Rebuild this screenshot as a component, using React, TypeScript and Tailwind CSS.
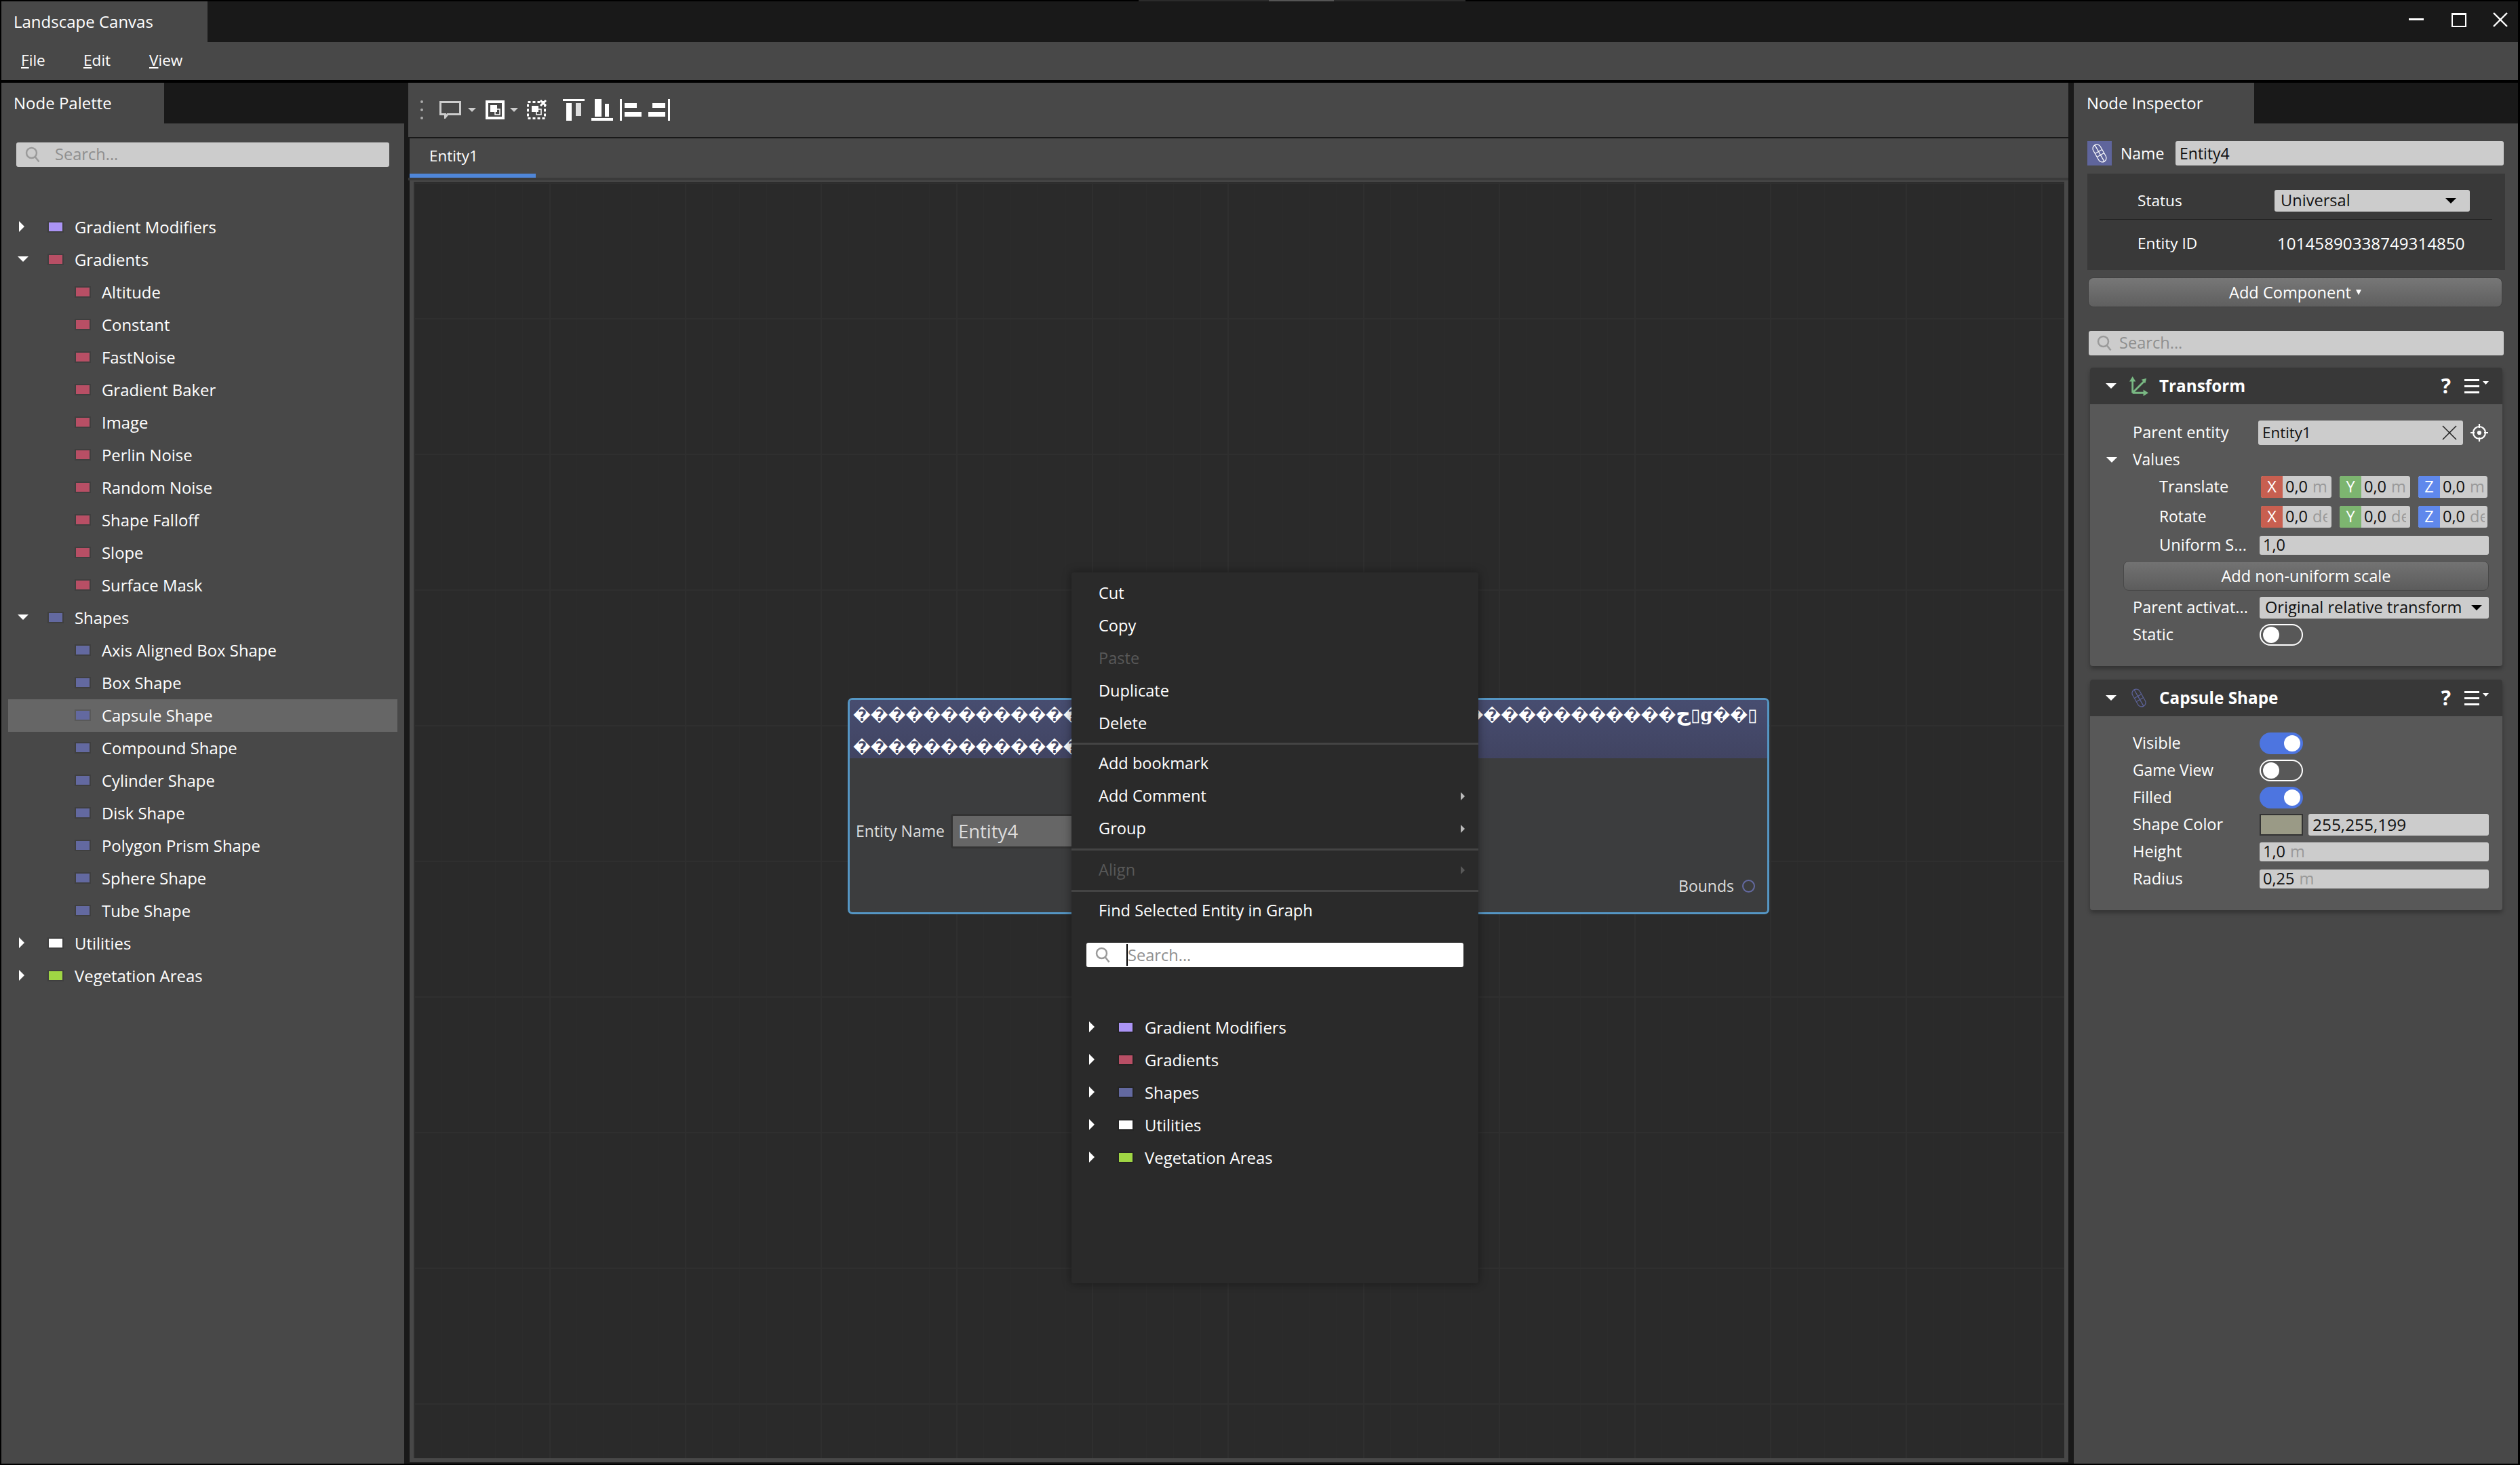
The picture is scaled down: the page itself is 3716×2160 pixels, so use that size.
import React from 'react';

// Palette tree data
const RED = 'bg-[#b84f65]';
const BLUE = 'bg-[#6369a0]';
const PURPLE = 'bg-[#ab94f5]';
const WHITE = 'bg-white';
const GREEN = 'bg-[#9fd644]';

const gradients = ['Altitude', 'Constant', 'FastNoise', 'Gradient Baker', 'Image', 'Perlin Noise', 'Random Noise', 'Shape Falloff', 'Slope', 'Surface Mask'];
const shapes = ['Axis Aligned Box Shape', 'Box Shape', 'Capsule Shape', 'Compound Shape', 'Cylinder Shape', 'Disk Shape', 'Polygon Prism Shape', 'Sphere Shape', 'Tube Shape'];

const CaretRight = ({ className = '' }: { className?: string }) => (
  <svg width="8" height="16" viewBox="0 0 8 16" className={className}>
    <polygon points="0,0 8,8 0,16" fill="currentColor" />
  </svg>
);

const CaretDown = ({ className = '', w = 16, h = 8 }: { className?: string; w?: number; h?: number }) => (
  <svg width={w} height={h} viewBox="0 0 16 8" preserveAspectRatio="none" className={className}>
    <polygon points="0,0 16,0 8,8" fill="currentColor" />
  </svg>
);

const SearchIcon = ({ color = '#9a9a9a' }: { color?: string }) => (
  <svg width="22" height="24" viewBox="0 0 22 24" fill="none" stroke={color} strokeWidth="2.5">
    <circle cx="9.5" cy="9.5" r="7.5" />
    <line x1="15" y1="15.5" x2="20.5" y2="22.5" />
  </svg>
);

const CapsuleIcon = ({ color, size = 26 }: { color: string; size?: number }) => (
  <svg width={size} height={size * 1.25} viewBox="0 0 24 30" fill="none" stroke={color} strokeWidth="1.2">
    <g transform="rotate(-30 12 15)">
      <rect x="6" y="1" width="12" height="28" rx="6" />
      <line x1="12" y1="1" x2="12" y2="29" />
      <line x1="6" y1="12" x2="18" y2="12" />
      <line x1="6" y1="18" x2="18" y2="18" />
    </g>
  </svg>
);

const Swatch = ({ color }: { color: string }) => (
  <span className={`block w-[20px] h-[13px] -mt-[2px] shrink-0 ${color} shadow-[0_0_0_2px_rgba(0,0,0,0.12)]`} />
);

function TreeRow({
  label,
  color,
  open,
  child,
  selected,
}: {
  label: string;
  color: string;
  open?: boolean;
  child?: boolean;
  selected?: boolean;
}) {
  return (
    <div className={`flex items-center h-[48px] text-[23.9px] ${selected ? 'bg-[#666666]' : ''}`}>
      <span className="w-[60px] shrink-0 pl-[14px] text-white">
        {!child && (open ? <CaretDown className="-mt-[2px]" /> : <CaretRight className="ml-[2px] -mt-[2px]" />)}
      </span>
      {child && <span className="w-[40px] shrink-0" />}
      <Swatch color={color} />
      <span className="ml-[18px]">{label}</span>
    </div>
  );
}

function MenuItem({ label, disabled, arrow }: { label: string; disabled?: boolean; arrow?: boolean }) {
  return (
    <div className={`flex items-center justify-between h-[48px] pl-[40px] pr-[20px] ${disabled ? 'text-[#585858]' : 'text-white'}`}>
      <span>{label}</span>
      {arrow && <CaretRight className={`w-[6px] h-[14px] ${disabled ? 'text-[#585858]' : 'text-[#bbbbbb]'}`} />}
    </div>
  );
}

const MenuSep = ({ h }: { h: string }) => (
  <div className={`flex items-center ${h}`}>
    <div className="w-full h-[3px] bg-[#444444]" />
  </div>
);

function VecField({ axis, color, value, unit, w }: { axis: string; color: string; value: string; unit: string; w: string }) {
  return (
    <div className={`flex h-[32px] ${w} rounded-[3px] overflow-hidden bg-[#cccccc]`}>
      <span className={`w-[32px] shrink-0 flex items-center justify-center text-white ${color}`}>{axis}</span>
      <span className="ml-[4px] text-[#111111] leading-[30px] whitespace-nowrap">{value}</span>
      <span className="ml-[7px] text-[#999999] leading-[30px] overflow-hidden w-[22px] shrink-0">{unit}</span>
    </div>
  );
}

const Toggle = ({ on }: { on?: boolean }) => (
  <span
    className={`flex items-center w-[64px] h-[32px] rounded-full px-[3px] ${
      on ? 'bg-[#4d75e0] justify-end pr-[4px]' : 'border-2 border-white justify-start'
    }`}
  >
    <span className="block w-[24px] h-[24px] rounded-full bg-white" />
  </span>
);

function CardHeader({ icon, title }: { icon: React.ReactNode; title: string }) {
  return (
    <div className="flex items-center h-[54px] bg-[#383838] rounded-t-[4px]">
      <CaretDown className="ml-[23px] text-white" />
      <span className="w-[28px] ml-[19px] flex justify-center">{icon}</span>
      <span className="ml-[16px] font-bold text-[24.3px]">{title}</span>
      <span className="ml-auto font-bold text-[30px] leading-[30px]">?</span>
      <svg width="36" height="24" viewBox="0 0 36 24" className="ml-[20px] mr-[20px]" fill="white">
        <rect x="0" y="2" width="22" height="3" />
        <rect x="0" y="11" width="22" height="3" />
        <rect x="0" y="20" width="22" height="3" />
        <polygon points="27,5 36,5 31.5,10" />
      </svg>
    </div>
  );
}

const Label = ({ children, className = '' }: { children: React.ReactNode; className?: string }) => (
  <span className={`block whitespace-nowrap ${className}`}>{children}</span>
);

export default function App() {
  return (
    <div className="relative flex flex-col w-[3716px] h-[2160px] overflow-hidden bg-black text-white text-[23.6px] font-['Open_Sans',sans-serif]">
      {/* Top edge strip */}
      <div className="flex h-[2px] pl-[1679px] shrink-0">
        <div className="w-[192px] bg-[#2b2b2b]" />
        <div className="w-[96px] bg-[#555555]" />
        <div className="w-[194px] bg-[#2b2b2b]" />
      </div>

      {/* Title bar */}
      <div className="flex h-[60px] ml-[2px] mr-[3px] shrink-0 bg-[#191919]">
        <div className="flex items-center w-[304px] bg-[#484848] pl-[18px] text-[24px]">Landscape Canvas</div>
        <div className="ml-auto flex items-center pr-[15px] pb-[6px]">
          <svg width="22" height="4" viewBox="0 0 22 4"><rect width="22" height="3" fill="white" /></svg>
          <svg width="22" height="22" viewBox="0 0 22 22" className="ml-[41px]" fill="none" stroke="white">
            <rect x="1" y="2" width="20" height="19" strokeWidth="2" />
            <rect x="1" y="1" width="20" height="3" fill="white" strokeWidth="0" />
          </svg>
          <svg width="22" height="22" viewBox="0 0 22 22" className="ml-[39px]" fill="none" stroke="white" strokeWidth="2.4">
            <line x1="1" y1="1" x2="21" y2="21" />
            <line x1="21" y1="1" x2="1" y2="21" />
          </svg>
        </div>
      </div>

      {/* Menu bar */}
      <div className="flex items-center h-[56px] ml-[2px] mr-[3px] shrink-0 bg-[#484848] pl-[29px] pb-[2px] text-[22.6px]">
        <span className="w-[92px]"><span className="underline">F</span>ile</span>
        <span className="w-[97px]"><span className="underline">E</span>dit</span>
        <span><span className="underline">V</span>iew</span>
      </div>

      {/* Dock area */}
      <div className="flex h-[2036px] mt-[4px] ml-[2px] mr-[3px] shrink-0 bg-[#191919]">
        {/* Node palette */}
        <div className="flex flex-col w-[594px] shrink-0">
          <div className="flex items-center w-[240px] h-[60px] shrink-0 bg-[#484848] pl-[18px] text-[24px]">Node Palette</div>
          <div className="flex-1 bg-[#484848] px-[10px] pt-[28px]">
            <div className="flex items-center h-[36px] mx-[12px] rounded-[3px] bg-[#cccccc] pl-[13px] text-[#8f8f8f]">
              <SearchIcon />
              <span className="ml-[22px]">Search...</span>
            </div>
            <div className="mt-[65px]">
              <TreeRow label="Gradient Modifiers" color={PURPLE} />
              <TreeRow label="Gradients" color={RED} open />
              {gradients.map((g) => (
                <TreeRow key={g} label={g} color={RED} child />
              ))}
              <TreeRow label="Shapes" color={BLUE} open />
              {shapes.map((s) => (
                <TreeRow key={s} label={s} color={BLUE} child selected={s === 'Capsule Shape'} />
              ))}
              <TreeRow label="Utilities" color={WHITE} />
              <TreeRow label="Vegetation Areas" color={GREEN} />
            </div>
          </div>
        </div>

        {/* Graph area */}
        <div className="flex flex-col w-[2448px] ml-[6px] h-[2034px] shrink-0">
          {/* Toolbar */}
          <div className="flex items-center h-[80px] shrink-0 bg-[#484848] pl-[18px]">
            <svg width="4" height="28" viewBox="0 0 4 28" fill="#aaaaaa">
              <circle cx="2" cy="2" r="2" />
              <circle cx="2" cy="14" r="2" />
              <circle cx="2" cy="26" r="2" />
            </svg>
            <svg width="32" height="26" viewBox="0 0 32 26" className="ml-[24px]" fill="none" stroke="#cccccc" strokeWidth="3">
              <path d="M1.5 1.5H30.5V19.5H12L8.5 24V19.5H1.5Z" />
            </svg>
            <CaretDown className="ml-[10px] text-[#cccccc]" w={12} h={6} />
            <svg width="28" height="28" viewBox="0 0 28 28" className="ml-[14px]">
              <rect x="2" y="2" width="24" height="24" fill="none" stroke="white" strokeWidth="4" />
              <rect x="7" y="7" width="10" height="10" fill="white" />
              <rect x="14" y="13" width="7" height="8" fill="none" stroke="white" strokeWidth="1.5" />
            </svg>
            <CaretDown className="ml-[8px] text-[#cccccc]" w={12} h={6} />
            <svg width="30" height="30" viewBox="0 0 30 30" className="ml-[13px]">
              <rect x="1.5" y="3.5" width="25" height="24" fill="none" stroke="white" strokeWidth="3" strokeDasharray="4 3" />
              <rect x="7" y="9" width="10" height="9" fill="white" />
              <rect x="14" y="14" width="7" height="8" fill="none" stroke="white" strokeWidth="1.5" />
              <path d="M20 1L28 9M28 1L20 9" stroke="white" strokeWidth="3" />
            </svg>
            <svg width="32" height="32" viewBox="0 0 32 32" fill="white" className="ml-[23px]">
              <rect x="0" y="0" width="32" height="3" />
              <rect x="5" y="6" width="8" height="26" />
              <rect x="19" y="6" width="8" height="19" fill="#dddddd" />
            </svg>
            <svg width="32" height="32" viewBox="0 0 32 32" fill="white" className="ml-[10px]">
              <rect x="0" y="28" width="32" height="4" />
              <rect x="5" y="0" width="10" height="26" />
              <rect x="20" y="7" width="6" height="19" />
            </svg>
            <svg width="32" height="32" viewBox="0 0 32 32" fill="white" className="ml-[10px]">
              <rect x="0" y="0" width="3" height="32" />
              <rect x="7" y="6" width="18" height="7" />
              <rect x="7" y="19" width="25" height="7" />
            </svg>
            <svg width="32" height="32" viewBox="0 0 32 32" fill="white" className="ml-[10px]">
              <rect x="29" y="0" width="3" height="32" />
              <rect x="6" y="6" width="19" height="7" />
              <rect x="0" y="19" width="25" height="7" />
            </svg>
          </div>

          {/* Tabs */}
          <div className="flex h-[58px] mt-[2px] ml-[2px] shrink-0 bg-[#484848]">
            <div className="flex items-start w-[186px] h-[58px] border-b-[6px] border-[#4f86d8] pl-[29px] pt-[9px] text-[22.4px]">Entity1</div>
          </div>
          <div className="h-[4px] shrink-0 bg-[#3a3a3a]" />

          {/* Canvas */}
          <div className="flex-1 ml-[2px] bg-[#484848] px-[6px] pt-[2px] pb-[6px]">
            <div className="relative w-[2434px] h-[1882px] bg-[#2a2a2a] bg-[linear-gradient(to_right,#2f2f2f_2px,transparent_2px),linear-gradient(to_bottom,#2f2f2f_2px,transparent_2px),linear-gradient(to_right,#2c2c2c_1px,transparent_1px)] bg-[size:200px_200px,200px_200px,40px_40px] bg-[position:0_1px,0_1px,0_0]">
              {/* Graph node */}
              <div className="absolute left-[640px] top-[761px] w-[1359px] h-[319px] flex flex-col rounded-[7px] border-[3px] border-[#5596c4] bg-[#3c3d3e] overflow-hidden">
                <div className="h-[86px] shrink-0 overflow-hidden bg-gradient-to-b from-[#474d70] to-[#414462] pl-[5px] font-['DejaVu_Sans',sans-serif] font-bold text-[23.2px] leading-[47px]">
                  <div className="whitespace-nowrap -mt-[3px]">
                    {'�'.repeat(47)}
                    <span className="text-[30px]">ج</span>
                    <span className="text-[26px] font-normal">▯</span>
                    <span className="font-['DejaVu_Serif',serif] text-[26px]">g</span>
                    ��
                    <span className="text-[26px] font-normal">▯</span>
                  </div>
                  <div className="whitespace-nowrap">{'�'.repeat(22)}</div>
                </div>
                <div className="flex items-center mt-[82px] pl-[9px] text-[23px] text-[#dddddd]">
                  <span>Entity Name</span>
                  <span className="ml-[9px] flex items-center w-[320px] h-[51px] rounded-[4px] border-[3px] border-[#333333] bg-[#666666] pl-[8px] text-[27.5px]">Entity4</span>
                </div>
                <div className="flex items-center justify-end mt-[38px] pr-[18px] text-[23px] text-[#dddddd]">
                  <span>Bounds</span>
                  <span className="ml-[12px] block w-[19px] h-[19px] rounded-full border-2 border-[#6369a0]" />
                </div>
              </div>

              {/* Context menu */}
              <div className="absolute left-[970px] top-[576px] w-[600px] h-[1048px] rounded-[3px] bg-[#2a2a2a] pt-[7px] shadow-[0_0_14px_rgba(0,0,0,0.4)]">
                <MenuItem label="Cut" />
                <MenuItem label="Copy" />
                <MenuItem label="Paste" disabled />
                <MenuItem label="Duplicate" />
                <MenuItem label="Delete" />
                <MenuSep h="h-[11px]" />
                <MenuItem label="Add bookmark" />
                <MenuItem label="Add Comment" arrow />
                <MenuItem label="Group" arrow />
                <MenuSep h="h-[13px]" />
                <MenuItem label="Align" disabled arrow />
                <MenuSep h="h-[12px]" />
                <MenuItem label="Find Selected Entity in Graph" />
                <div className="flex items-center h-[36px] mt-[23px] mx-[22px] rounded-[3px] bg-white pl-[13px] text-[#8f8f8f]">
                  <SearchIcon />
                  <span className="ml-[24px] border-l-2 border-black leading-[32px]">Search...</span>
                </div>
                <div className="mt-[65px]">
                  {[
                    ['Gradient Modifiers', PURPLE],
                    ['Gradients', RED],
                    ['Shapes', BLUE],
                    ['Utilities', WHITE],
                    ['Vegetation Areas', GREEN],
                  ].map(([label, color]) => (
                    <div key={label} className="flex items-center h-[48px] pl-[26px] text-[23.9px]">
                      <CaretRight className="-mt-[2px]" />
                      <span className="ml-[36px]"><Swatch color={color} /></span>
                      <span className="ml-[18px]">{label}</span>
                    </div>
                  ))}
                </div>
              </div>
            </div>
          </div>
        </div>

        {/* Node inspector */}
        <div className="flex flex-col w-[655px] ml-[8px] shrink-0">
          <div className="flex items-center w-[266px] h-[60px] shrink-0 bg-[#484848] pl-[19px] text-[23.9px]">Node Inspector</div>
          <div className="flex-1 bg-[#484848] pl-[20px] pt-[26px]">
            <div className="flex items-center h-[36px]">
              <span className="flex items-center justify-center w-[36px] h-[36px] bg-[#5f659c]">
                <CapsuleIcon color="white" size={24} />
              </span>
              <span className="ml-[13px] w-[66px] text-[23px]">Name</span>
              <span className="flex items-center ml-[15px] w-[484px] h-[36px] rounded-[3px] bg-[#cccccc] pl-[6px] text-[#111111] text-[23px]">Entity4</span>
            </div>

            <div className="mt-[12px] w-[616px] h-[142px] bg-[#393939] pt-[24px]">
              <div className="flex items-center h-[32px] pl-[74px]">
                <span className="w-[202px] text-[22.6px]">Status</span>
                <span className="flex items-center justify-between w-[288px] h-[32px] rounded-[3px] bg-[#cccccc] pl-[9px] pr-[20px] text-[#111111]">
                  Universal
                  <CaretDown className="text-black" />
                </span>
              </div>
              <div className="mt-[11px] ml-[18px] w-[579px] h-px bg-[#222222]" />
              <div className="flex items-center h-[32px] mt-[19px] pl-[74px]">
                <span className="w-[206px] text-[22.6px]">Entity ID</span>
                <span className="text-[24.2px]">10145890338749314850</span>
              </div>
            </div>

            <div className="flex items-center justify-center mt-[11px] ml-[1px] w-[611px] h-[44px] pt-[1px] rounded-[8px] border border-[#404040] bg-gradient-to-b from-[#777777] to-[#5f5f5f]">
              Add Component
              <CaretDown className="ml-[7px] -mt-[1px]" w={8} h={8} />
            </div>

            <div className="flex items-center mt-[35px] ml-[2px] w-[612px] h-[36px] rounded-[3px] bg-[#cccccc] pl-[12px] text-[#8f8f8f]">
              <SearchIcon />
              <span className="ml-[11px]">Search...</span>
            </div>

            {/* Transform card */}
            <div className="mt-[18px] ml-[4px] w-[608px] h-[440px] rounded-[4px] bg-[#585858] shadow-[0_4px_6px_rgba(0,0,0,0.3)]">
              <CardHeader
                title="Transform"
                icon={
                  <svg width="30" height="30" viewBox="0 0 30 30" fill="none" stroke="#79b883" strokeWidth="3">
                    <path d="M5 26V5M5 26H26M5 26L24 7" />
                    <polygon points="5,0 10,8 0,8" fill="#79b883" strokeWidth="0" />
                    <polygon points="30,26 22,21 22,31" fill="#79b883" strokeWidth="0" />
                    <polygon points="27,3 25,11 19,5" fill="#79b883" strokeWidth="0" />
                  </svg>
                }
              />
              <div className="pl-[63px] pt-[24px]">
                <div className="flex items-center h-[36px]">
                  <Label className="w-[185px]">Parent entity</Label>
                  <span className="flex items-center justify-between w-[302px] h-[36px] rounded-[3px] bg-[#cccccc] pl-[6px] pr-[9px] text-[#111111] text-[22.4px]">
                    Entity1
                    <svg width="22" height="22" viewBox="0 0 22 22" stroke="#222222" strokeWidth="1.6">
                      <line x1="1" y1="1" x2="21" y2="21" />
                      <line x1="21" y1="1" x2="1" y2="21" />
                    </svg>
                  </span>
                  <svg width="26" height="28" viewBox="0 0 26 28" className="ml-[11px]" fill="none" stroke="white" strokeWidth="2.2">
                    <circle cx="13" cy="14" r="9" />
                    <circle cx="13" cy="14" r="2" fill="white" />
                    <path d="M13 1V7M13 21V27M0 14H6M20 14H26" />
                  </svg>
                </div>
                <div className="flex items-center h-[36px] mt-[4px] -ml-[39px]">
                  <CaretDown className="text-white" />
                  <span className="ml-[23px] text-[22.8px]">Values</span>
                </div>
                <div className="flex items-center h-[32px] mt-[6px] pl-[39px]">
                  <Label className="w-[150px]">Translate</Label>
                  <div className="flex gap-[12px]">
                    <VecField axis="X" color="bg-[#c85f50]" value="0,0" unit="m" w="w-[104px]" />
                    <VecField axis="Y" color="bg-[#7db570]" value="0,0" unit="m" w="w-[104px]" />
                    <VecField axis="Z" color="bg-[#5f88ec]" value="0,0" unit="m" w="w-[102px]" />
                  </div>
                </div>
                <div className="flex items-center h-[32px] mt-[12px] pl-[39px]">
                  <Label className="w-[150px] text-[22.8px]">Rotate</Label>
                  <div className="flex gap-[12px]">
                    <VecField axis="X" color="bg-[#c85f50]" value="0,0" unit="deg" w="w-[104px]" />
                    <VecField axis="Y" color="bg-[#7db570]" value="0,0" unit="deg" w="w-[104px]" />
                    <VecField axis="Z" color="bg-[#5f88ec]" value="0,0" unit="deg" w="w-[102px]" />
                  </div>
                </div>
                <div className="flex items-center h-[28px] mt-[12px] pl-[39px]">
                  <Label className="w-[148px]">Uniform S...</Label>
                  <span className="flex items-center w-[338px] h-[28px] rounded-[3px] bg-[#cccccc] pl-[5px] text-[#111111]">1,0</span>
                </div>
                <div className="flex items-center justify-center mt-[9px] -ml-[14px] w-[539px] h-[44px] pt-[1px] rounded-[8px] border border-[#484848] bg-gradient-to-b from-[#737373] to-[#5c5c5c]">
                  Add non-uniform scale
                </div>
                <div className="flex items-center h-[32px] mt-[9px]">
                  <Label className="w-[187px]">Parent activat...</Label>
                  <span className="flex items-center justify-between w-[338px] h-[32px] rounded-[3px] bg-[#cccccc] pl-[8px] pr-[10px] text-[#111111]">
                    Original relative transform
                    <CaretDown className="text-black" />
                  </span>
                </div>
                <div className="flex items-center h-[32px] mt-[8px]">
                  <Label className="w-[187px]">Static</Label>
                  <Toggle />
                </div>
              </div>
            </div>

            {/* Capsule shape card */}
            <div className="mt-[20px] ml-[4px] w-[608px] h-[340px] rounded-[4px] bg-[#585858] shadow-[0_4px_6px_rgba(0,0,0,0.3)]">
              <CardHeader title="Capsule Shape" icon={<CapsuleIcon color="#5d639a" size={24} />} />
              <div className="pl-[63px] pt-[24px]">
                <div className="flex items-center h-[32px]">
                  <Label className="w-[187px]">Visible</Label>
                  <Toggle on />
                </div>
                <div className="flex items-center h-[32px] mt-[8px]">
                  <Label className="w-[187px] text-[22.8px]">Game View</Label>
                  <Toggle />
                </div>
                <div className="flex items-center h-[32px] mt-[8px]">
                  <Label className="w-[187px]">Filled</Label>
                  <Toggle on />
                </div>
                <div className="flex items-center h-[32px] mt-[8px]">
                  <Label className="w-[187px]">Shape Color</Label>
                  <span className="block w-[64px] h-[32px] border-2 border-[#333333] bg-[#9a9a86]" />
                  <span className="flex items-center ml-[8px] w-[266px] h-[32px] rounded-[3px] bg-[#cccccc] pl-[6px] text-[#111111] text-[24.4px]">255,255,199</span>
                </div>
                <div className="flex items-center h-[28px] mt-[10px]">
                  <Label className="w-[187px]">Height</Label>
                  <span className="flex items-center w-[338px] h-[28px] rounded-[3px] bg-[#cccccc] pl-[5px] text-[#111111]">
                    1,0<span className="ml-[7px] text-[#999999]">m</span>
                  </span>
                </div>
                <div className="flex items-center h-[28px] mt-[12px]">
                  <Label className="w-[187px]">Radius</Label>
                  <span className="flex items-center w-[338px] h-[28px] rounded-[3px] bg-[#cccccc] pl-[5px] text-[#111111]">
                    0,25<span className="ml-[7px] text-[#999999]">m</span>
                  </span>
                </div>
              </div>
            </div>
          </div>
        </div>
      </div>
    </div>
  );
}
